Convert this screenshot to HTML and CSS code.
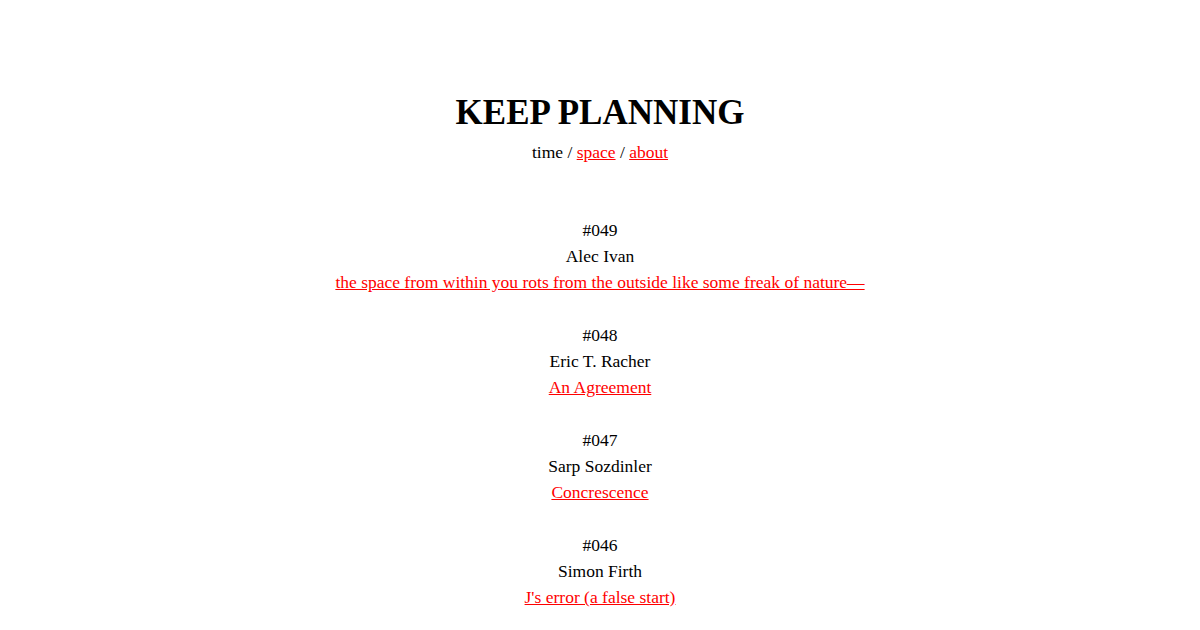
FILE: index.html
```html
<!DOCTYPE html>
<html>
<head>
<meta charset="utf-8">
<link rel="stylesheet" href="styles.css">
</head>
<body>
<main class="page">
  <header class="masthead">
    <h1 class="title">KEEP PLANNING</h1>
    <nav class="nav">time / <a href="#">space</a> / <a href="#">about</a></nav>
  </header>
  <ul class="entries">
    <li class="entry">
      <div>#049</div>
      <div>Alec Ivan</div>
      <div><a href="#">the space from within you rots from the outside like some freak of nature—</a></div>
    </li>
    <li class="entry">
      <div>#048</div>
      <div>Eric T. Racher</div>
      <div><a href="#">An Agreement</a></div>
    </li>
    <li class="entry">
      <div>#047</div>
      <div>Sarp Sozdinler</div>
      <div><a href="#">Concrescence</a></div>
    </li>
    <li class="entry">
      <div>#046</div>
      <div>Simon Firth</div>
      <div><a href="#">J's error (a false start)</a></div>
    </li>
  </ul>
</main>
</body>
</html>
```

FILE: styles.css
```css
html, body {
  margin: 0;
  padding: 0;
  background: #fff;
}
body {
  font-family: "Liberation Serif", "Times New Roman", serif;
  font-size: 17.5px;
  line-height: 26px;
  color: #000;
  text-align: center;
}
.page {
  padding-top: 92px;
}
.title {
  font-size: 35px;
  line-height: 42px;
  font-weight: bold;
  margin: 0;
}
.nav {
  margin-top: 5px;
}
a {
  color: #ff0000;
  text-decoration: underline;
}
.entries {
  list-style: none;
  margin: 52px 0 0;
  padding: 0;
}
.entry {
  margin-bottom: 27px;
}
```
